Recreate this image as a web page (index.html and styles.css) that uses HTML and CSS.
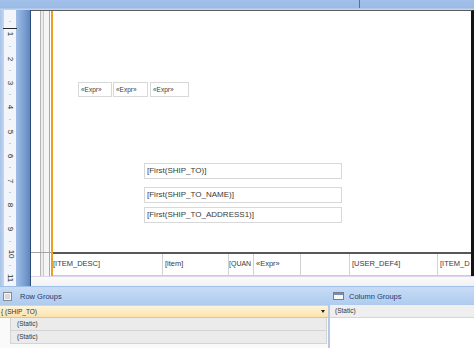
FILE: index.html
```html
<!DOCTYPE html>
<html lang="en">
<head>
    <meta charset="UTF-8">
    <title>Report Designer</title>
    <link rel="stylesheet" href="styles.css">
</head>
<body>
    <div class="app">
        <div class="topbar">
            <div class="topbar-left"></div>
        </div>

        <div class="workspace">
            <div class="ruler">
                <div class="ruler-edge"></div>
                <div class="ruler-scale">
                    <span class="mark">·</span><span class="mark num">1</span>
                    <span class="mark">·</span><span class="mark num">2</span>
                    <span class="mark">·</span><span class="mark num">3</span>
                    <span class="mark">·</span><span class="mark num">4</span>
                    <span class="mark">·</span><span class="mark num">5</span>
                    <span class="mark">·</span><span class="mark num">6</span>
                    <span class="mark">·</span><span class="mark num">7</span>
                    <span class="mark">·</span><span class="mark num">8</span>
                    <span class="mark">·</span><span class="mark num">9</span>
                    <span class="mark">·</span><span class="mark num">10</span>
                    <span class="mark">·</span><span class="mark num">11</span>
                </div>
                <div class="ruler-band"></div>
                <div class="ruler-cursor"></div>
            </div>

            <div class="surface">
                <div class="design">
                    <div class="gutter">
                        <div class="gutter-top"></div>
                        <div class="gutter-bottom"></div>
                    </div>
                    <div class="margin-line"></div>
                    <div class="page">
                        <div class="page-body">
                            <!-- report items sit where the author dropped them -->
                            <div class="item expr" style="left: 25px; top: 71px; width: 34px;">«Expr»</div>
                            <div class="item expr" style="left: 60px; top: 71px; width: 35px;">«Expr»</div>
                            <div class="item expr" style="left: 97px; top: 71px; width: 39px;">«Expr»</div>
                            <div class="item field" style="left: 91px; top: 152px;">[First(SHIP_TO)]</div>
                            <div class="item field" style="left: 91px; top: 176px;">[First(SHIP_TO_NAME)]</div>
                            <div class="item field" style="left: 91px; top: 196px;">[First(SHIP_TO_ADDRESS1)]</div>
                        </div>
                        <div class="page-sep"></div>
                        <div class="detail-row">
                            <div class="cell">[ITEM_DESC]</div>
                            <div class="cell">[item]</div>
                            <div class="cell narrow">[QUAN</div>
                            <div class="cell">«Expr»</div>
                            <div class="cell"></div>
                            <div class="cell">[USER_DEF4]</div>
                            <div class="cell">[ITEM_D</div>
                        </div>
                    </div>
                </div>
                <div class="surface-foot"></div>
            </div>
        </div>

        <div class="groups">
            <div class="groups-head">
                <div class="head-cell head-rows">
                    <svg class="icon" width="9" height="9" viewBox="0 0 9 9">
                        <rect x="0.5" y="0.5" width="8" height="8" fill="#f4f4f4" stroke="#8a8a8a"/>
                        <rect x="2" y="2" width="5" height="5" fill="#d9d9d9"/>
                    </svg>
                    <span>Row Groups</span>
                </div>
                <div class="head-cell head-cols">
                    <svg class="icon" width="11" height="8" viewBox="0 0 11 8">
                        <rect x="0.5" y="0.5" width="10" height="7" fill="#f7f7f7" stroke="#7d7d7d"/>
                        <rect x="1" y="1" width="9" height="2" fill="#6f8fbf"/>
                    </svg>
                    <span>Column Groups</span>
                </div>
            </div>
            <div class="groups-body">
                <div class="row-panel">
                    <div class="group-row active">
                        <span>{ (SHIP_TO)</span>
                        <span class="drop"></span>
                    </div>
                    <div class="group-row static">(Static)</div>
                    <div class="group-row static">(Static)</div>
                </div>
                <div class="col-panel">
                    <div class="group-row col-static">(Static)</div>
                </div>
            </div>
        </div>
    </div>
</body>
</html>
```

FILE: styles.css
```css
* {
    box-sizing: border-box;
}

html, body {
    margin: 0;
}

body {
    width: 474px;
    height: 348px;
    overflow: hidden;
    background: #fff;
    font-family: "Liberation Sans", Arial, sans-serif;
    color: #333;
}

.app {
    display: flex;
    flex-direction: column;
    height: 348px;
}

/* Top strip */
.topbar {
    height: 10px;
    flex-shrink: 0;
    background: linear-gradient(#a2c0e8, #9bbbe5 75%, #c9dbf2);
}

.topbar-left {
    width: 360px;
    height: 8px;
    border-right: 1px solid #4f71a3;
}

/* Ruler + design surface */
.workspace {
    height: 276px;
    flex-shrink: 0;
    display: flex;
}

.ruler {
    position: relative;
    width: 31px;
    display: flex;
    border-right: 1px solid #2e4b75;
}

.ruler-edge {
    width: 4px;
    background: linear-gradient(90deg, #a9c4ea, #c2d6f0);
}

.ruler-scale {
    width: 12px;
    display: flex;
    flex-direction: column;
    align-items: center;
    padding-top: 6.1px;
    background: #f2f5fa;
    overflow: hidden;
}

.mark {
    height: 12.2px;
    flex-shrink: 0;
    display: flex;
    align-items: center;
    justify-content: center;
    font-size: 7px;
    line-height: 8px;
    color: #555;
}

.num {
    transform: rotate(90deg);
    font-size: 8px;
    color: #2a2a2a;
}

.ruler-band {
    flex: 1;
    background: linear-gradient(90deg, #9fbde6, #7a9fd1 60%, #5f87c1);
}

.ruler-cursor {
    position: absolute;
    left: 3px;
    top: 18px;
    width: 14px;
    height: 1px;
    background: #2a2a2a;
}

.surface {
    flex: 1;
    display: flex;
    flex-direction: column;
}

.design {
    height: 266px;
    display: flex;
    border-top: 1px solid #5c5c5c;
    border-right: 3px solid #141414;
}

.gutter {
    width: 20px;
    display: flex;
    flex-direction: column;
    background: linear-gradient(90deg, #fff 0 9px, #b6b6b6 9px 10px, #ececec 10px 12px, #c9c9c9 12px 13px, #f5f5f5 13px 18px, #a9a9a9 18px 19px, #fff 19px);
}

.gutter-top {
    height: 241px;
}

.gutter-bottom {
    flex: 1;
    border-top: 1px solid #a3a3a3;
}

.margin-line {
    width: 2px;
    background: #eba022;
}

.page {
    flex: 1;
    display: flex;
    flex-direction: column;
}

.page-body {
    position: relative;
    height: 241px;
    background: #fff;
}

.item {
    position: absolute;
    border: 1px solid #d8d8d8;
    white-space: nowrap;
    overflow: hidden;
}

.expr {
    height: 15px;
    font-size: 6.5px;
    line-height: 13px;
    padding-left: 2px;
    color: #3c3c3c;
}

.field {
    width: 198px;
    height: 16px;
    font-size: 8px;
    line-height: 14px;
    padding-left: 2px;
    color: #3a3a3a;
}

.page-sep {
    height: 2px;
    background: #585858;
}

.detail-row {
    flex: 1;
    display: grid;
    grid-template-columns: 109px 66px 25px 47px 49px 88px 1fr;
    border-bottom: 1px solid #cdcdcd;
}

.cell {
    border-left: 1px solid #d2d2d2;
    font-size: 7.5px;
    line-height: 20px;
    padding-left: 2px;
    white-space: nowrap;
    overflow: hidden;
    color: #3a3a3a;
}

.cell:first-child {
    border-left: none;
    padding-left: 0;
}

.cell.narrow {
    padding-left: 0;
    font-size: 7px;
}

.surface-foot {
    flex: 1;
    border-top: 1px solid #dcd6ea;
    background: linear-gradient(#fbfbfb, #f1f1f1);
}

/* Grouping pane */
.groups {
    flex: 1;
    display: flex;
    flex-direction: column;
}

.groups-head {
    height: 19px;
    display: flex;
    background: linear-gradient(#c7dcf6, #aecbef);
    border-top: 1px solid #9ebfe8;
}

.head-cell {
    display: flex;
    align-items: center;
    font-size: 7.5px;
    color: #1f3c6e;
}

.head-rows {
    width: 330px;
    padding-left: 3px;
    gap: 8px;
}

.head-cols {
    flex: 1;
    padding-left: 3px;
    gap: 5px;
}

.groups-body {
    flex: 1;
    display: flex;
}

.row-panel {
    width: 330px;
    border-right: 2px solid #b7c9e2;
    background: #fafafa;
}

.col-panel {
    flex: 1;
    background: #fff;
}

.group-row {
    height: 13px;
    font-size: 6.5px;
    line-height: 12px;
    color: #333;
    white-space: nowrap;
}

.group-row.active {
    display: flex;
    justify-content: space-between;
    align-items: center;
    padding-left: 1px;
    padding-right: 3px;
    background: linear-gradient(#fef4da, #fce3a9);
    border-top: 1px solid #f0d48e;
    border-bottom: 1px solid #e6c878;
}

.drop {
    width: 0;
    height: 0;
    border-left: 2.5px solid transparent;
    border-right: 2.5px solid transparent;
    border-top: 3px solid #222;
}

.group-row.static {
    margin-left: 10px;
    margin-right: 1px;
    padding-left: 6px;
    background: #ebebeb;
    border: 1px solid #d4d4d4;
    border-top: none;
}

.col-static {
    padding-left: 5px;
    background: #efefef;
    border-bottom: 1px solid #d6d6d6;
}
```
